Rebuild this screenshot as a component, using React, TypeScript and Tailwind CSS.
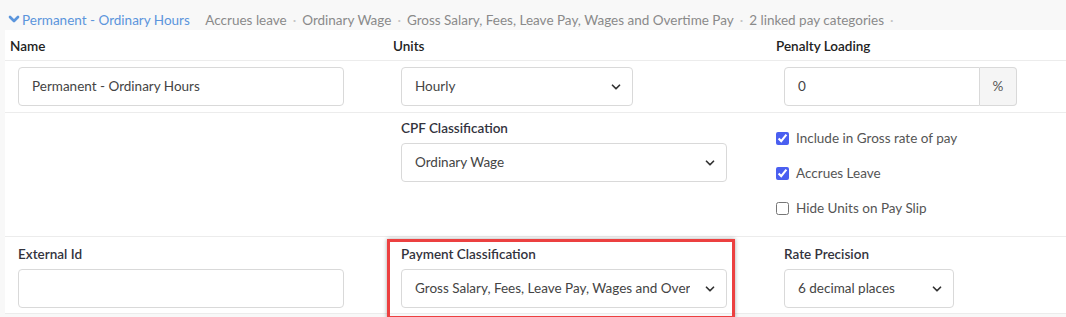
import { ChevronDown } from "lucide-react";

const font = { fontFamily: "Lato, 'Open Sans', Arial, sans-serif" };

const Chevron = () => (
  <ChevronDown size={14} strokeWidth={3} className="pointer-events-none absolute right-[10px] top-1/2 -translate-y-1/2 text-[#333]" />
);

const SelectBox = ({ value, width }: { value: string; width: string }) => (
  <div className={`relative ${width}`}>
    <div className="flex h-[39px] items-center rounded-[4px] border border-[#d9d9d9] bg-white pl-[13px] pr-[36px] text-[13.5px] text-[#444]">
      <span className="block min-w-0 flex-1 overflow-hidden whitespace-nowrap">{value}</span>
    </div>
    <Chevron />
  </div>
);

const TextBox = ({ value }: { value?: string }) => (
  <div className="flex h-[39px] w-[326px] items-center rounded-[4px] border border-[#d9d9d9] bg-white px-[13px] text-[13.5px] text-[#444]">
    {value}
  </div>
);

const Label = ({ children }: { children: string }) => (
  <div className="text-[13.5px] leading-[16px] font-semibold text-[#33333d]">{children}</div>
);

const Check = ({ checked, label }: { checked: boolean; label: string }) => (
  <label className="flex h-[20px] items-center gap-[7px] text-[13.5px] text-[#555]">
    <input type="checkbox" defaultChecked={checked} className="h-[13px] w-[13px] accent-[#4a5ff0]" />
    {label}
  </label>
);

const App = () => {
  const meta = [
    "Accrues leave",
    "Ordinary Wage",
    "Gross Salary, Fees, Leave Pay, Wages and Overtime Pay",
    "2 linked pay categories",
  ];

  return (
    <div className="h-[317px] w-[1066px] overflow-hidden bg-[#f8f8f8]" style={font}>
      {/* summary line */}
      <div className="flex h-[30px] items-end pb-[1px] pl-[6px] text-[13.5px] leading-[18px]">
        <ChevronDown size={16} strokeWidth={4} className="mb-[2px] text-[#5b95dc]" />
        <span className="text-[#5b95dc]">Permanent - Ordinary Hours</span>
        {meta.map((m, i) => (
          <span key={i} className="flex items-center">
            <span className="px-[6px] text-[#c4c4c4]">{i === 0 ? "\u00a0" : "·"}</span>
            <span className="text-[#8a8a8a]">{m}</span>
          </span>
        ))}
        <span className="px-[6px] text-[#c4c4c4]">·</span>
      </div>

      <div className="ml-[5px] bg-white">
        {/* header labels */}
        <div className="grid h-[31px] grid-cols-[383px_383px_1fr] items-center border-b border-[#ececec] pl-[5px] pt-[2px] text-[13.5px] font-semibold text-[#222]">
          <div>Name</div>
          <div>Units</div>
          <div>Penalty Loading</div>
        </div>

        {/* first row inputs */}
        <div className="grid h-[52px] grid-cols-[383px_383px_1fr] border-b border-[#ececec] pt-[6px]">
          <div className="pl-[13px]">
            <TextBox value="Permanent - Ordinary Hours" />
          </div>
          <div className="pl-[13px]">
            <SelectBox value="Hourly" width="w-[232px]" />
          </div>
          <div className="flex pl-[13px]">
            <div className="flex h-[39px] w-[196px] items-center rounded-l-[4px] border border-[#d9d9d9] px-[13px] text-[13.5px] text-[#444]">
              0
            </div>
            <div className="flex h-[39px] w-[37px] items-center justify-center rounded-r-[4px] border border-l-0 border-[#d9d9d9] bg-[#f5f5f5] text-[13.5px] text-[#555]">
              %
            </div>
          </div>
        </div>

        {/* second row */}
        <div className="grid h-[124px] grid-cols-[383px_383px_1fr] border-b border-[#ececec]">
          <div />
          <div className="flex flex-col gap-[7px] pl-[13px] pt-[7px]">
            <Label>CPF Classification</Label>
            <SelectBox value="Ordinary Wage" width="w-[326px]" />
          </div>
          <div className="flex flex-col gap-[15px] pl-[5px] pt-[15px]">
            <Check checked label="Include in Gross rate of pay" />
            <Check checked label="Accrues Leave" />
            <Check checked={false} label="Hide Units on Pay Slip" />
          </div>
        </div>

        {/* third row */}
        <div className="grid h-[77px] grid-cols-[383px_383px_1fr] border-b border-[#ececec]">
          <div className="flex flex-col gap-[7px] pl-[13px] pt-[9px]">
            <Label>External Id</Label>
            <TextBox />
          </div>
          <div className="relative flex flex-col gap-[7px] pl-[13px] pt-[9px]">
            <Label>Payment Classification</Label>
            <SelectBox value="Gross Salary, Fees, Leave Pay, Wages and Overtime Pay" width="w-[326px]" />
            <div className="pointer-events-none absolute left-[-1px] top-[2px] h-[80px] w-[348px] border-[3px] border-[#ec4040] shadow-[0_0_4px_rgba(0,0,0,0.35)]" />
          </div>
          <div className="flex flex-col gap-[7px] pl-[13px] pt-[9px]">
            <Label>Rate Precision</Label>
            <SelectBox value="6 decimal places" width="w-[170px]" />
          </div>
        </div>
      </div>
    </div>
  );
};

export default App;
